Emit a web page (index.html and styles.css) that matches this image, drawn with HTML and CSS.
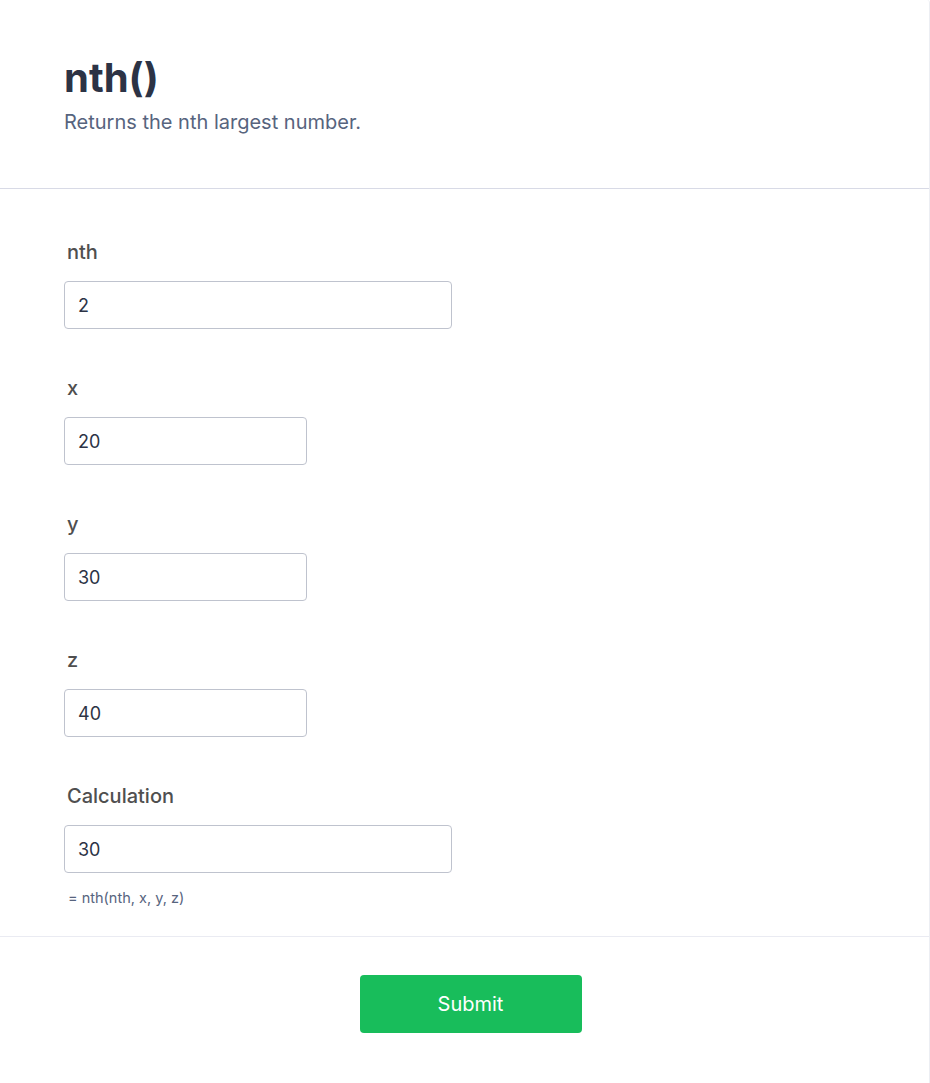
FILE: index.html
```html
<!DOCTYPE html>
<html lang="en">
<head>
<meta charset="utf-8">
<title>nth()</title>
<link rel="stylesheet" href="styles.css">
</head>
<body>
<div class="card">
  <header class="header">
    <h1 class="title">nth()</h1>
    <p class="subtitle">Returns the nth largest number.</p>
  </header>
  <form class="form">
    <div class="field">
      <label class="label">nth</label>
      <input class="input input-wide" type="text" value="2">
    </div>
    <div class="field">
      <label class="label">x</label>
      <input class="input input-short" type="text" value="20">
    </div>
    <div class="field">
      <label class="label">y</label>
      <input class="input input-short" type="text" value="30">
    </div>
    <div class="field">
      <label class="label">z</label>
      <input class="input input-short" type="text" value="40">
    </div>
    <div class="field field-last">
      <label class="label">Calculation</label>
      <input class="input input-wide" type="text" value="30">
      <div class="hint">= nth(nth, x, y, z)</div>
    </div>
  </form>
  <div class="footer">
    <button class="submit" type="button">Submit</button>
  </div>
</div>
</body>
</html>
```

FILE: styles.css
```css
html, body {
  margin: 0;
  padding: 0;
  background: #ffffff;
}
body {
  font-family: Inter, "Noto Sans", sans-serif;
  color: #2c3345;
}
.card {
  width: 930px;
  min-height: 1083px;
  box-sizing: border-box;
  border-right: 1px solid #eceef3;
  border-top-right-radius: 3px;
  background: #fff;
}
.header {
  padding: 53px 64px 0;
  height: 189px;
  box-sizing: border-box;
  border-bottom: 1px solid #d8dae6;
}
.title {
  margin: 0;
  font-size: 40px;
  line-height: 50px;
  font-weight: 700;
  color: #2c3345;
}
.subtitle {
  margin: 6px 0 0;
  font-size: 20px;
  line-height: 26px;
  color: #57647e;
}
.form {
  display: flex;
  flex-direction: column;
  padding: 51px 64px 0;
  border-bottom: 1px solid #eaebf2;
}
.field {
  display: flex;
  flex-direction: column;
  align-items: flex-start;
  padding-bottom: 47px;
}
.field-last {
  padding-bottom: 29px;
}
.label {
  font-size: 20px;
  line-height: 24px;
  font-weight: 500;
  color: #4f4f4f;
  padding-left: 3px;
  margin-bottom: 17px;
}
.input {
  height: 48px;
  box-sizing: border-box;
  border: 1px solid #bfc3ce;
  border-radius: 4px;
  padding: 0 13px;
  font-family: Inter, "Noto Sans", sans-serif;
  font-size: 18px;
  color: #2c3345;
  background: #fff;
  outline: none;
}
.input-wide {
  width: 388px;
}
.input-short {
  width: 243px;
}
.hint {
  margin-top: 16px;
  padding-left: 4px;
  font-size: 14.5px;
  line-height: 18px;
  font-family: Inter, sans-serif;
  color: #57647e;
}
.footer {
  display: flex;
  justify-content: center;
  padding: 38px 0 0 0;
}
.submit {
  width: 222px;
  height: 58px;
  margin-left: 12px;
  border: none;
  border-radius: 4px;
  background: #18bd5b;
  color: #ffffff;
  font-family: Inter, "Noto Sans", sans-serif;
  font-size: 20px;
  font-weight: 400;
  cursor: pointer;
}
```
